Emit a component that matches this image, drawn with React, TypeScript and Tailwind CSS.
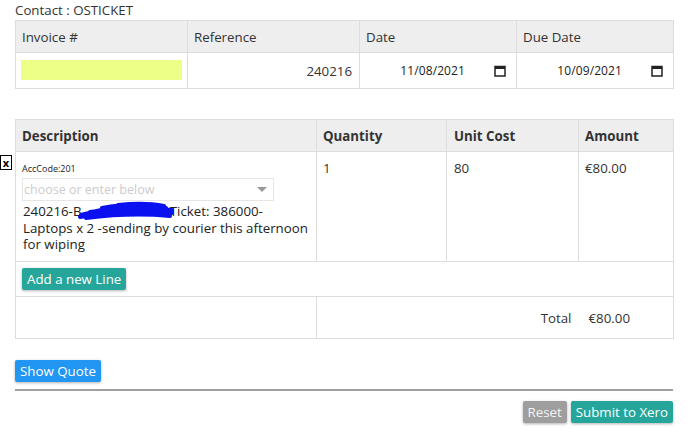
import React from "react";

const font = { fontFamily: '"Open Sans", "Noto Sans", sans-serif' };

function CalendarIcon() {
  return (
    <svg width="12" height="12" viewBox="0 0 12 12" className="shrink-0">
      <rect x="1" y="1.5" width="10" height="9.5" fill="none" stroke="#222" strokeWidth="1.5" />
      <rect x="1" y="1.5" width="10" height="2.5" fill="#222" />
    </svg>
  );
}

function DateCell({ value }: { value: string }) {
  return (
    <div className="flex items-center justify-end pr-[10px] h-[35px]">
      <span className="text-[12px] tracking-[0.1px] text-[#222] mr-[29px]">{value}</span>
      <CalendarIcon />
    </div>
  );
}

export default function App() {
  return (
    <div className="relative w-[687px] h-[434px] bg-white text-[#333] overflow-hidden text-[13.3px] leading-[18px]" style={font}>
      <div className="px-[15px]">
        <div className="leading-[20px] h-[20px] text-[#333]">Contact : OSTICKET</div>

        <table className="w-[658px] table-fixed border-collapse">
          <colgroup>
            <col className="w-[172px]" />
            <col className="w-[172px]" />
            <col className="w-[157px]" />
            <col className="w-[157px]" />
          </colgroup>
          <thead>
            <tr className="bg-[#eeeeee] h-[32px]">
              <th className="border border-[#dddddd] text-left font-normal px-[6px] py-0">Invoice #</th>
              <th className="border border-[#dddddd] text-left font-normal px-[6px] py-0">Reference</th>
              <th className="border border-[#dddddd] text-left font-normal px-[6px] py-0">Date</th>
              <th className="border border-[#dddddd] text-left font-normal px-[6px] py-0">Due Date</th>
            </tr>
          </thead>
          <tbody>
            <tr className="h-[35px]">
              <td className="border border-[#dddddd] px-[5px] py-0 align-middle">
                <div className="w-[161px] h-[20px] bg-[#eeff88] -mt-[2px]"></div>
              </td>
              <td className="border border-[#dddddd] text-right pr-[7px] py-0">240216</td>
              <td className="border border-[#dddddd] p-0">
                <DateCell value="11/08/2021" />
              </td>
              <td className="border border-[#dddddd] p-0">
                <DateCell value="10/09/2021" />
              </td>
            </tr>
          </tbody>
        </table>

        <div className="h-[30px]"></div>

        <table className="w-[658px] table-fixed border-collapse">
          <colgroup>
            <col className="w-[301px]" />
            <col className="w-[130px]" />
            <col className="w-[132px]" />
            <col className="w-[95px]" />
          </colgroup>
          <thead>
            <tr className="bg-[#eeeeee] h-[32px]">
              <th className="border border-[#dddddd] text-left font-bold px-[6px] py-0">Description</th>
              <th className="border border-[#dddddd] text-left font-bold px-[6px] py-0">Quantity</th>
              <th className="border border-[#dddddd] text-left font-bold px-[7px] py-0">Unit Cost</th>
              <th className="border border-[#dddddd] text-left font-bold px-[6px] py-0">Amount</th>
            </tr>
          </thead>
          <tbody>
            <tr>
              <td className="border border-[#dddddd] align-top px-[6px] pt-[11px] pb-0 h-[110px]">
                <div className="text-[9px] leading-[12px] text-[#222]">AccCode:201</div>
                <div className="mt-[3px] w-[252px] h-[23px] border border-[#e6e6e6] flex items-center justify-between pl-[1px] pr-[6px]">
                  <span className="text-[12.5px] text-[#cccccc] leading-[20px] whitespace-nowrap">choose or enter below</span>
                  <svg width="10" height="6" viewBox="0 0 10 6"><path d="M0 0 L10 0 L5 5 Z" fill="#999" /></svg>
                </div>
                <div className="leading-[16.5px] text-[#222] mt-[2px] pl-[1px] whitespace-nowrap">
                  <div>
                    240216-B
                    <span className="relative inline-block w-[84px] h-[12px] align-middle">
                      <svg className="absolute left-[-4px] top-[-6px]" width="96" height="22" viewBox="0 0 96 22">
                        <path
                          d="M3 15 C 20 10, 40 6, 60 6 S 86 8, 93 11 M2 17 C 30 12, 60 9, 94 13 M8 18 C 40 14, 70 14, 92 16 M24 8 C 46 4, 70 4, 88 8 M12 12 C 40 8, 70 8, 94 10 M40 5 C 60 3, 76 4, 86 6"
                          stroke="#0a10f0"
                          strokeWidth="4"
                          fill="none"
                          strokeLinecap="round"
                        />
                      </svg>
                    </span>
                    -Ticket: 386000-
                  </div>
                  <div>Laptops x 2 -sending by courier this afternoon</div>
                  <div>for wiping</div>
                </div>
              </td>
              <td className="border border-[#dddddd] align-top px-[6px] pt-[7px]">1</td>
              <td className="border border-[#dddddd] align-top px-[7px] pt-[7px]">80</td>
              <td className="border border-[#dddddd] align-top px-[6px] pt-[7px]">€80.00</td>
            </tr>
            <tr className="h-[35px]">
              <td colSpan={4} className="border border-[#dddddd] px-[6px] py-0">
                <button className="h-[22px] px-[5px] bg-[#26a69a] text-white rounded-[2px] shadow-[0_1px_3px_rgba(0,0,0,0.3)] leading-[22px] block">
                  Add a new Line
                </button>
              </td>
            </tr>
            <tr className="h-[42px]">
              <td className="border border-[#dddddd]"></td>
              <td colSpan={3} className="border border-[#dddddd]">
                <div className="flex justify-end items-center pr-[43px] text-[#333]">
                  <span>Total</span>
                  <span className="ml-[17px]">€80.00</span>
                </div>
              </td>
            </tr>
          </tbody>
        </table>

        <div className="h-[21px]"></div>
        <button className="h-[22px] px-[5px] bg-[#2196f3] text-white rounded-[2px] shadow-[0_1px_3px_rgba(0,0,0,0.3)] leading-[22px] block">
          Show Quote
        </button>
        <div className="mt-[7px] h-[2px] bg-[#a0a0a0] w-[658px]"></div>
        <div className="flex justify-end gap-[4px] mt-[10px] w-[658px]">
          <button className="h-[22px] px-[5px] bg-[#9e9e9e] text-[#f5f5f5] rounded-[2px] shadow-[0_1px_3px_rgba(0,0,0,0.3)] leading-[22px]">
            Reset
          </button>
          <button className="h-[22px] px-[5px] bg-[#26a69a] text-white rounded-[2px] shadow-[0_1px_3px_rgba(0,0,0,0.3)] leading-[22px]">
            Submit to Xero
          </button>
        </div>
      </div>

      <div className="absolute left-0 top-[155px] w-[12px] h-[15px] border border-black bg-white flex items-center justify-center text-[11px] font-bold leading-none text-black">
        x
      </div>
    </div>
  );
}
